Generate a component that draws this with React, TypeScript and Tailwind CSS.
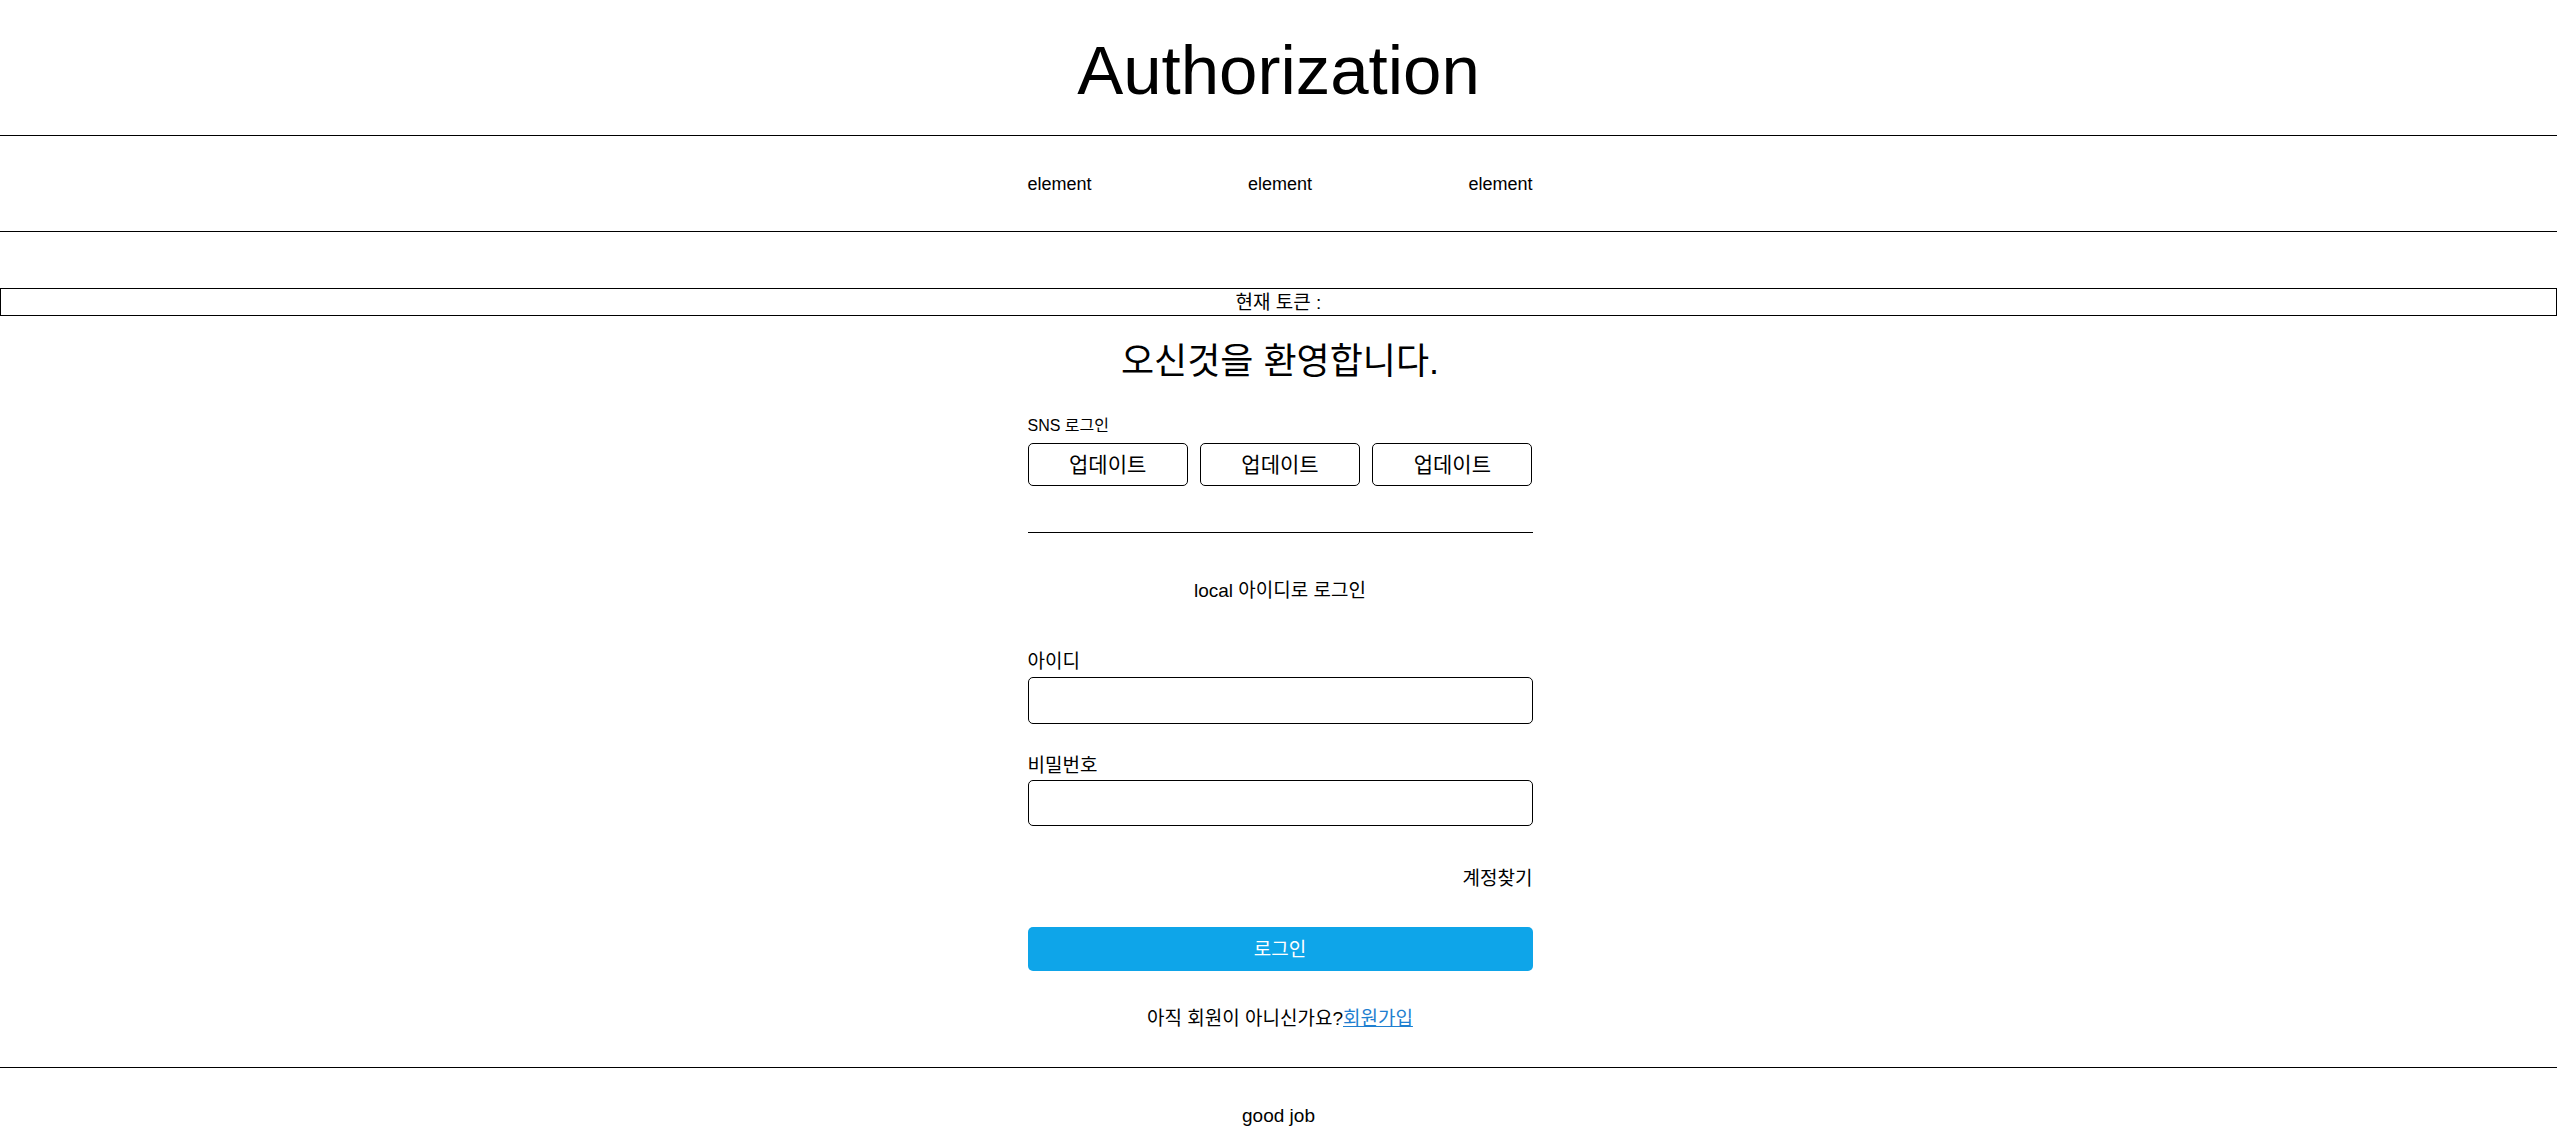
import React from 'react';

const snsButtons = ['업데이트', '업데이트', '업데이트'];
const navItems = ['element', 'element', 'element'];

const App: React.FC = () => {
    return (
        <div className="min-h-screen bg-white text-black font-['Liberation_Sans','Noto_Sans_CJK_KR',sans-serif]">
            {/* Header */}
            <header className="h-[136px] border-b border-black flex items-center justify-center pt-[6px]">
                <h1 className="text-[69px] leading-none font-normal">Authorization</h1>
            </header>

            {/* Nav */}
            <nav className="h-[96px] border-b border-black flex items-center">
                <ul className="w-[505px] ml-[calc(50%-251px)] flex justify-between text-[18px] leading-none">
                    {navItems.map((item, i) => (
                        <li key={i}>{item}</li>
                    ))}
                </ul>
            </nav>

            {/* Token */}
            <div className="mt-[56px] h-[28px] border border-black flex items-center justify-center text-[19px] leading-none">
                현재 토큰 :
            </div>

            {/* Login form */}
            <main className="w-[505px] ml-[calc(50%-251px)] flex flex-col">
                <h2 className="mt-[28px] text-center text-[36px] leading-none font-normal">오신것을 환영합니다.</h2>

                <p className="mt-[38px] text-[16px] leading-none">SNS 로그인</p>
                <div className="mt-[9px] grid grid-cols-3 gap-[12px]">
                    {snsButtons.map((label, i) => (
                        <button
                            key={i}
                            className="h-[43px] border border-black rounded-[5px] bg-white text-[21px] leading-none"
                        >
                            {label}
                        </button>
                    ))}
                </div>

                <hr className="mt-[46px] border-black" />

                <p className="mt-[48px] text-center text-[19px] leading-none">local 아이디로 로그인</p>

                <label className="block mt-[52px] text-[19px] leading-none">아이디</label>
                <input type="text" className="mt-[6px] h-[47px] border border-black rounded-[5px] px-2 outline-none" />

                <label className="block mt-[32px] text-[19px] leading-none">비밀번호</label>
                <input type="password" className="mt-[5px] h-[46px] border border-black rounded-[5px] px-2 outline-none" />

                <div className="mt-[43px] text-right text-[19px] leading-none">계정찾기</div>

                <button className="mt-[39px] h-[44px] rounded-[5px] bg-[#0ea5e9] text-white text-[19px] leading-none">
                    로그인
                </button>

                <p className="mt-[38px] text-center text-[19px] leading-none">
                    아직 회원이 아니신가요?<a href="#" className="text-[#1f7fd0] underline">회원가입</a>
                </p>
            </main>

            {/* Footer */}
            <footer className="mt-[39px] border-t border-black pt-[38px] pb-[40px] text-center text-[19px] leading-none">
                good job
            </footer>
        </div>
    );
};

export default App;
